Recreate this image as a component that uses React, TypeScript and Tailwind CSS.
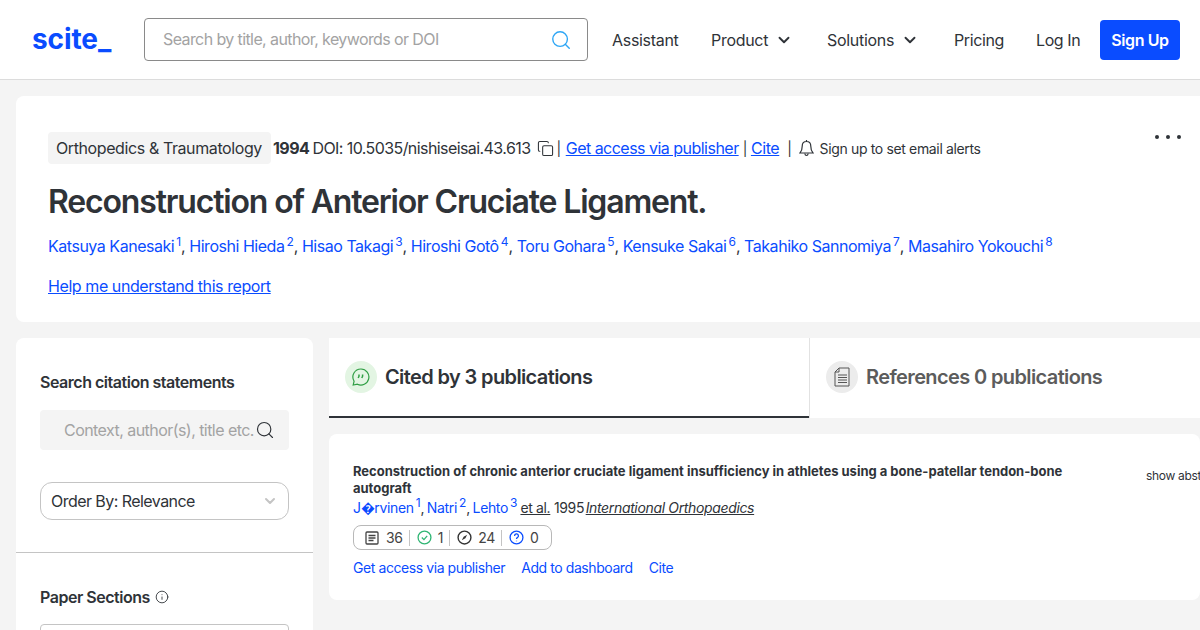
import { ChevronDown, Copy, Info, Search } from 'lucide-react';

const authors = ['Katsuya Kanesaki', 'Hiroshi Hieda', 'Hisao Takagi', 'Hiroshi Gotô', 'Toru Gohara', 'Kensuke Sakai', 'Takahiko Sannomiya', 'Masahiro Yokouchi'];

function Sup({ n }: { n: number }) {
  return <sup className="text-[12px] ml-[2px] top-[-6px] tracking-normal">{n}</sup>;
}

function Header() {
  return (
    <header className="h-[80px] bg-white border-b border-[#dcdcdc] flex items-center text-[16px] text-[#2f3338]">
      <div className="w-[144px] pl-[32px] text-[#0a4cff] text-[28px] font-bold leading-none tracking-[-0.1px] pb-[2px]">scite_</div>
      <div className="w-[444px] h-[43px] border border-[#8a8a8a] rounded-[4px] flex items-center justify-between pl-[18px] pr-[15px]">
        <span className="text-[#a3a3a3] tracking-[-0.6px] pb-[2px]">Search by title, author, keywords or DOI</span>
        <Search className="w-[22px] h-[22px] text-[#2ea6f5]" strokeWidth={1.5} />
      </div>
      <nav className="flex items-center ml-[24px]">
        <span className="w-[99px] tracking-[-0.3px]">Assistant</span>
        <span className="w-[116px] flex items-center tracking-[-0.3px]">Product<ChevronDown className="w-[18px] h-[18px] ml-[7px]" strokeWidth={2.5} /></span>
        <span className="w-[127px] flex items-center tracking-[-0.3px]">Solutions<ChevronDown className="w-[18px] h-[18px] ml-[7px]" strokeWidth={2.5} /></span>
        <span className="w-[82px] tracking-[-0.4px]">Pricing</span>
        <span className="w-[64px] tracking-[-0.4px]">Log In</span>
        <span className="w-[80px] h-[40px] bg-[#0a4cff] rounded-[4px] text-white font-semibold flex items-center justify-center tracking-[-0.4px]">Sign Up</span>
      </nav>
    </header>
  );
}

function PaperCard() {
  return (
    <section className="relative ml-[16px] mt-[16px] w-[1200px] h-[226px] bg-white rounded-lg pl-[32px] pt-[36px] text-[#2f3338]">
      <div className="flex items-center h-[32px] text-[16px] tracking-[-0.4px] whitespace-nowrap">
        <span className="h-[32px] pl-[8px] pr-[9px] bg-[#f4f4f4] rounded-[4px] flex items-center">Orthopedics &amp; Traumatology</span>
        <b className="ml-[2px] font-bold tracking-[-0.5px]">1994</b>
        <span className="ml-[3px] tracking-[-0.58px]">DOI: 10.5035/nishiseisai.43.613</span>
        <Copy className="w-[17px] h-[17px] ml-[7px]" strokeWidth={1.5} />
        <span className="ml-[2px] text-[14px]">|</span>
        <a className="ml-[5px] text-[#0a4cff] underline tracking-[-0.52px]">Get access via publisher</a>
        <span className="ml-[4px] text-[14px]">|</span>
        <a className="ml-[4px] text-[#0a4cff] underline">Cite</a>
        <span className="ml-[8px] text-[14px]">|</span>
        <svg className="ml-[7px]" width="15" height="18" viewBox="0 0 15 18" fill="none" stroke="#2f3338" strokeWidth="1.2">
          <path d="M7.5 1v1.5M7.5 2.5C4.8 2.5 3.2 4.6 3.2 7.2c0 3.4-.7 5.2-2.2 6.8h13c-1.5-1.6-2.2-3.4-2.2-6.8 0-2.6-1.6-4.7-4.3-4.7z" />
          <path d="M5.8 14.5c.2 1.4.9 2 1.7 2s1.5-.6 1.7-2" />
        </svg>
        <span className="ml-[6px] text-[14px] tracking-[-0.35px]">Sign up to set email alerts</span>
      </div>
      <div className="absolute right-[35px] top-[39px] flex gap-[7px]">
        <i className="w-[4px] h-[4px] rounded-full bg-[#2f3338]" />
        <i className="w-[4px] h-[4px] rounded-full bg-[#2f3338]" />
        <i className="w-[4px] h-[4px] rounded-full bg-[#2f3338]" />
      </div>
      <h1 className="mt-[18px] text-[32px] leading-[40px] font-semibold tracking-[-1.17px] whitespace-nowrap">Reconstruction of Anterior Cruciate Ligament.</h1>
      <p className="mt-[12px] text-[16px] leading-[24px] text-[#0a4cff] tracking-[-0.47px] whitespace-nowrap">
        {authors.map((a, i) => (
          <span key={a}>{i > 0 && <span className="text-[#2f3338]">, </span>}{a}<Sup n={i + 1} /></span>
        ))}
      </p>
      <a className="block mt-[16px] text-[16px] leading-[24px] text-[#0a4cff] underline tracking-[-0.42px]">Help me understand this report</a>
    </section>
  );
}

function Sidebar() {
  return (
    <aside className="w-[297px] h-[400px] bg-white rounded-t-lg text-[#2f3338] shrink-0">
      <div className="px-[24px] pt-[34px] h-[215px] border-b border-[#c4c4c4]">
        <h3 className="text-[16px] leading-[20px] font-semibold tracking-[-0.48px]">Search citation statements</h3>
        <div className="mt-[18px] h-[40px] bg-[#f4f4f4] rounded-[4px] flex items-center pl-[24px] text-[16px] text-[#a3a3a3] tracking-[-0.55px] whitespace-nowrap">
          Context, author(s), title etc.
          <Search className="w-[20px] h-[20px] ml-[1px] text-[#2f3338]" strokeWidth={1.4} />
        </div>
        <div className="mt-[32px] h-[38px] border border-[#c4c4c4] rounded-[12px] flex items-center justify-between pl-[10px] pr-[10px] text-[16px] tracking-[-0.55px]">
          Order By: Relevance
          <ChevronDown className="w-[16px] h-[16px] text-[#c4c4c4]" strokeWidth={3} />
        </div>
      </div>
      <div className="px-[24px] pt-[34px]">
        <h3 className="flex items-center text-[16px] leading-[20px] font-semibold tracking-[-0.48px]">Paper Sections<Info className="w-[14px] h-[14px] ml-[5px]" strokeWidth={1.5} /></h3>
        <div className="mt-[17px] h-[38px] border border-[#c4c4c4] rounded-[4px]" />
      </div>
    </aside>
  );
}

function Tabs() {
  return (
    <div className="flex h-[80px] w-[871px] bg-white text-[20px] font-semibold tracking-[-0.62px] whitespace-nowrap">
      <div className="w-[480px] border-b-2 border-[#2f3338] flex items-center pl-[16px] text-[#2f3338]">
        <span className="w-[32px] h-[32px] rounded-full bg-[#e3f5e3] flex items-center justify-center mr-[8px]">
          <svg width="20" height="20" viewBox="0 0 20 20" fill="none" stroke="#2f9e44" strokeWidth="1.2">
            <path d="M10 2a8 8 0 1 1-3.6 15.2L2.2 18l.9-3.8A8 8 0 0 1 10 2z" />
            <path d="M8 7.5v1.7L7.2 11M11.6 7.5v1.7L10.8 11" strokeWidth="1.5" />
          </svg>
        </span>
        Cited by 3 publications
      </div>
      <div className="flex-1 border-l border-[#e2e2e2] flex items-center pl-[16px] pb-[2px] text-[#5c5c5c]">
        <span className="w-[32px] h-[32px] rounded-full bg-[#ececec] flex items-center justify-center mr-[8px]">
          <svg width="18" height="20" viewBox="0 0 18 20" fill="none" stroke="#555" strokeWidth="1">
            <path d="M6 1h10v18H2V5z" />
            <path d="M6 1v4H2M5 8h9M5 10.5h9M5 13h9M5 15.5h9" />
          </svg>
        </span>
        References 0 publications
      </div>
    </div>
  );
}

function CiteCard() {
  return (
    <article className="relative mt-[16px] w-[871px] h-[166px] bg-white rounded-lg pl-[24px] pt-[29px] text-[#2f3338]">
      <h4 className="w-[740px] text-[13px] leading-[17px] font-bold tracking-[-0.01px]">Reconstruction of chronic anterior cruciate ligament insufficiency in athletes using a bone-patellar tendon-bone autograft</h4>
      <span className="absolute left-[817px] top-[33px] text-[12px] tracking-[-0.3px] whitespace-nowrap">show abstract</span>
      <p className="mt-[1px] text-[14px] leading-[20px] tracking-[-0.35px] whitespace-nowrap">
        <span className="text-[#0a4cff]">J�rvinen<Sup n={1} /></span>, <span className="text-[#0a4cff] -ml-[1px]">Natri<Sup n={2} /></span>, <span className="text-[#0a4cff] -ml-[1px]">Lehto<Sup n={3} /></span>
        <span className="underline ml-[3px]">et al.</span> 1995 <i className="underline -ml-[2px]">International Orthopaedics</i>
      </p>
      <div className="mt-[7px] w-[199px] h-[25px] border border-[#b8b8b8] rounded-[8px] flex items-center pl-[11px] text-[14px] text-[#444] tracking-[-0.3px]">
        <svg width="14" height="14" viewBox="0 0 14 14" fill="none" stroke="#444" strokeWidth="1.3">
          <rect x="1" y="1" width="12" height="12" rx="1" />
          <path d="M3.5 4.5h7M3.5 7h7M3.5 9.5h5" />
        </svg>
        <span className="ml-[7px]">36</span>
        <i className="h-[16px] border-l border-[#c4c4c4] ml-[6px] mr-[7px]" />
        <svg width="15" height="15" viewBox="0 0 14 14" fill="none" stroke="#2fb573" strokeWidth="1.2">
          <circle cx="7" cy="7" r="6" />
          <path d="M4.5 7l2 2 3-3.5" />
        </svg>
        <span className="ml-[6px]">1</span>
        <i className="h-[16px] border-l border-[#c4c4c4] ml-[6px] mr-[7px]" />
        <svg width="15" height="15" viewBox="0 0 14 14" fill="none" stroke="#333" strokeWidth="1.3">
          <circle cx="7" cy="7" r="6" />
          <path d="M9.5 4.5L7.8 7.8 4.5 9.5l1.7-3.3z" fill="#333" stroke="none" />
        </svg>
        <span className="ml-[6px]">24</span>
        <i className="h-[16px] border-l border-[#c4c4c4] ml-[6px] mr-[7px]" />
        <svg width="15" height="15" viewBox="0 0 14 14" fill="none" stroke="#0a4cff" strokeWidth="1.2">
          <circle cx="7" cy="7" r="6" />
          <path d="M5.2 5.5a1.8 1.8 0 1 1 2.6 1.6c-.6.3-.8.7-.8 1.2M7 10v.6" />
        </svg>
        <span className="ml-[6px]">0</span>
      </div>
      <div className="mt-[8px] flex gap-[16px] text-[14px] leading-[20px] text-[#0a4cff] tracking-[-0.42px]">
        <span>Get access via publisher</span>
        <span>Add to dashboard</span>
        <span>Cite</span>
      </div>
    </article>
  );
}

export default function App() {
  return (
    <div className="w-[1200px] h-[630px] overflow-hidden bg-[#f4f4f4] font-['Inter','Liberation_Sans',sans-serif]">
      <Header />
      <PaperCard />
      <div className="flex gap-[16px] ml-[16px] mt-[16px]">
        <Sidebar />
        <main>
          <Tabs />
          <CiteCard />
        </main>
      </div>
    </div>
  );
}
